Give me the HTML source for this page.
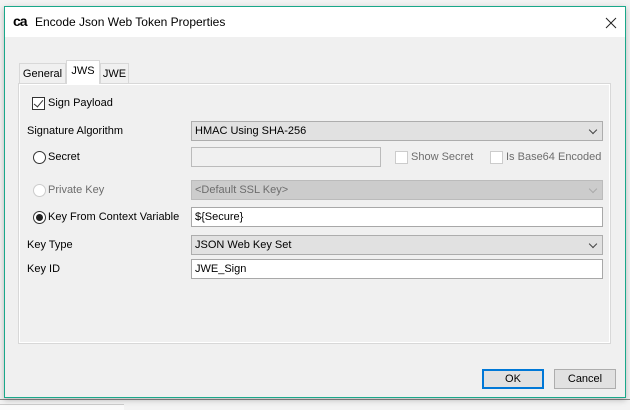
<!DOCTYPE html><html><head><style>
*{box-sizing:border-box;margin:0;padding:0}
body{width:630px;height:410px;background:#f3f3f3;position:relative;overflow:hidden;font-family:"Liberation Sans",sans-serif;font-size:11px;color:#000}
.a{position:absolute}
.win{left:4px;top:6px;width:622px;height:392px;background:#f0f0f0;border:1px solid #1aa88a;box-shadow:0 2px 6px rgba(0,0,0,.25)}
.title{left:0;top:0;width:620px;height:30px;background:#fff}
.panel{left:13px;top:76px;width:593px;height:261px;border:1px solid #d8d8d8;box-shadow:inset 1px 1px 0 #fff,inset -1px -1px 0 #fff}
.tab{top:56px;height:21px;border:1px solid #d8d8d8;border-bottom:none;background:#f0f0f0;padding:4px 0 0;text-align:center}
.fld{height:20px;border:1px solid #a8a8a8;background:#fff;padding:3px 3px}
.cmb{height:20px;border:1px solid #adadad;background:#e1e1e1;padding:3px 3px}
.chev{position:absolute;right:6px;top:5px;width:6px;height:6px;border-right:1px solid #444;border-bottom:1px solid #444;transform:rotate(45deg)}
.cb{width:13px;height:13px;border:1px solid #333;background:#fff}
.rad{width:13px;height:13px;border:1px solid #333;border-radius:50%;background:#fff}
.btn{height:20px;width:62px;border:1px solid #adadad;background:#e1e1e1;text-align:center;padding-top:3px}
</style></head><body>
<div class="a" style="left:0;top:399px;width:630px;height:1px;background:#888"></div>
<div class="a" style="left:0;top:404px;width:124px;height:6px;border-top:1px solid #ccc;background:#fafafa"></div>
<div class="a win">
 <div class="a title"></div>
 <div class="a" style="left:8px;top:6px;font-weight:bold;font-size:14px;letter-spacing:-1px">ca</div>
 <div class="a" style="left:30px;top:8px;font-size:12px">Encode Json Web Token Properties</div>
 <svg class="a" style="left:600px;top:10px" width="12" height="12"><path d="M1 1L11 11M11 1L1 11" stroke="#222" stroke-width="1"/></svg>
 <div class="a tab" style="left:14px;width:47px">General</div>
 <div class="a tab" style="left:61px;top:53px;height:24px;width:34px;background:#fff;z-index:2">JWS</div>
 <div class="a tab" style="left:95px;width:29px">JWE</div>
 <div class="a panel"></div>
 <div class="a cb" style="left:27px;top:90px"><span style="position:absolute;left:3px;top:0px;width:5px;height:9px;border-right:1.5px solid #333;border-bottom:1.5px solid #333;transform:rotate(40deg)"></span></div>
 <div class="a" style="left:43px;top:90px">Sign Payload</div>
 <div class="a" style="left:22px;top:118px">Signature Algorithm</div>
 <div class="a cmb" style="left:186px;top:114px;width:412px">HMAC Using SHA-256<span class="chev"></span></div>
 <div class="a rad" style="left:28px;top:144px"></div>
 <div class="a" style="left:43px;top:144px">Secret</div>
 <div class="a fld" style="left:186px;top:140px;width:190px;background:#f0f0f0;border-color:#bbb"></div>
 <div class="a cb" style="left:390px;top:144px;border-color:#ccc"></div>
 <div class="a" style="left:406px;top:144px;color:#6d6d6d">Show Secret</div>
 <div class="a cb" style="left:485px;top:144px;border-color:#ccc"></div>
 <div class="a" style="left:501px;top:144px;color:#6d6d6d">Is Base64 Encoded</div>
 <div class="a rad" style="left:28px;top:177px;border-color:#ccc"></div>
 <div class="a" style="left:43px;top:177px;color:#6d6d6d">Private Key</div>
 <div class="a cmb" style="left:186px;top:173px;width:412px;background:#ccc;border-color:#bbb;color:#6d6d6d">&lt;Default SSL Key&gt;<span class="chev" style="border-color:#aaa"></span></div>
 <div class="a rad" style="left:28px;top:204px"><span style="position:absolute;left:2px;top:2px;width:7px;height:7px;border-radius:50%;background:#222"></span></div>
 <div class="a" style="left:43px;top:204px">Key From Context Variable</div>
 <div class="a fld" style="left:186px;top:200px;width:412px">${Secure}</div>
 <div class="a" style="left:22px;top:232px">Key Type</div>
 <div class="a cmb" style="left:186px;top:228px;width:412px">JSON Web Key Set<span class="chev"></span></div>
 <div class="a" style="left:22px;top:256px">Key ID</div>
 <div class="a fld" style="left:186px;top:252px;width:412px">JWE_Sign</div>
 <div class="a btn" style="left:477px;top:362px;border:2px solid #0078d7;padding-top:2px">OK</div>
 <div class="a btn" style="left:549px;top:362px">Cancel</div>
</div>
</body></html>
